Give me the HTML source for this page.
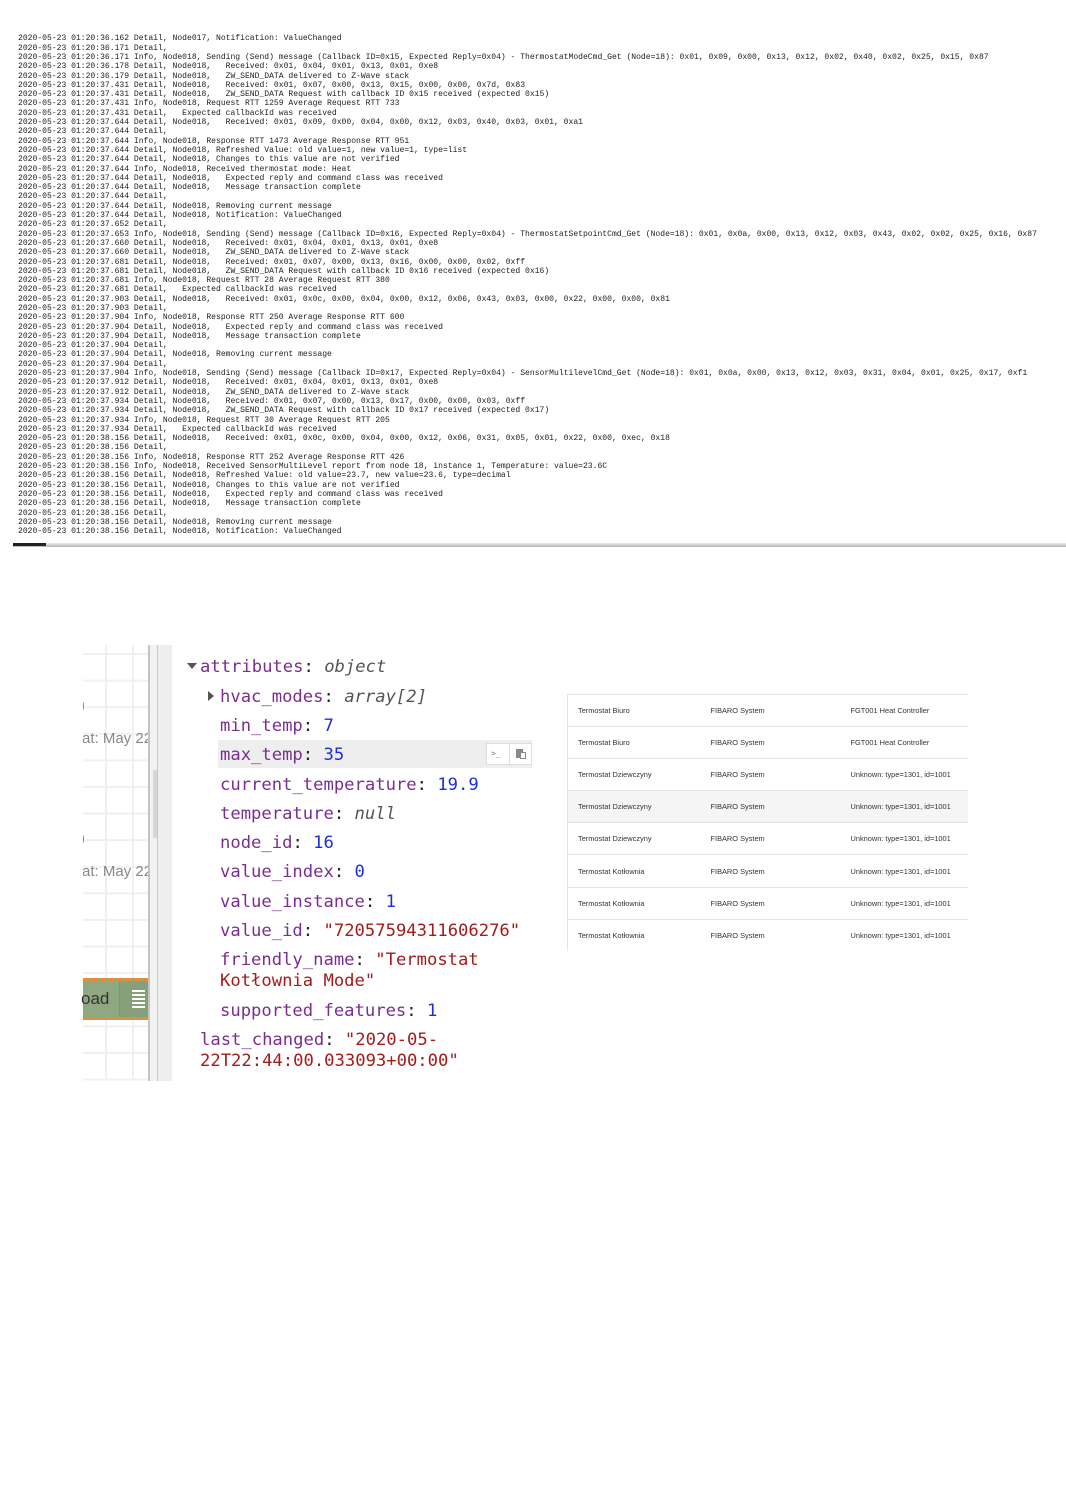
<!DOCTYPE html>
<html><head><meta charset="utf-8"><style>
*{margin:0;padding:0;box-sizing:border-box}
body{width:1066px;height:1508px;background:#fff;position:relative;overflow:hidden}
#log{position:absolute;left:18px;top:34.4px;font:8.06px/9.3px "Liberation Mono",monospace;color:#222;white-space:pre}
.sb{position:absolute;left:13px;top:543px;width:1053px;height:4px;background:linear-gradient(#e8e8e8,#b8b8b8)}
.sb i{position:absolute;left:0;top:0;width:33px;height:3px;background:#222}
.canvas{position:absolute;left:83px;top:645px;width:66px;height:436px;background-color:#fff;
background-image:linear-gradient(#f0f0f0 2px,transparent 2px),linear-gradient(90deg,#f0f0f0 2px,transparent 2px);
background-size:27px 26.6px;background-position:0 8px,22px 0}
.lab{position:absolute;font:15px "Liberation Sans",sans-serif;color:#888;white-space:nowrap}
.node{position:absolute;left:83px;top:978px;width:66px;height:42px;background:#8fa882;border-top:3px dashed #f08a2c;border-bottom:3px dashed #f08a2c}
.node .d{position:absolute;left:36px;top:0;width:30px;height:100%;background:#86a07a;border-left:1px solid #7d9572}
.json{position:absolute;font:17.2px/20px "DejaVu Sans Mono",monospace;white-space:pre;color:#7a2e8f}
.n{color:#1c2fd6}.s{color:#a31c1c}.i{color:#555;font-style:italic}.p{color:#222}
table{position:absolute;left:567px;top:694px;width:401px;border-collapse:collapse;font:7.4px "Liberation Sans",sans-serif;color:#333;border-left:1px solid #e4e4e4}
td{height:32.1px;border-top:1px solid #e4e4e4;padding-left:10px;vertical-align:middle}
tr.g td{background:#f5f5f5}
</style></head><body>
<div id="log">2020-05-23 01:20:36.162 Detail, Node017, Notification: ValueChanged
2020-05-23 01:20:36.171 Detail,
2020-05-23 01:20:36.171 Info, Node018, Sending (Send) message (Callback ID=0x15, Expected Reply=0x04) - ThermostatModeCmd_Get (Node=18): 0x01, 0x09, 0x00, 0x13, 0x12, 0x02, 0x40, 0x02, 0x25, 0x15, 0x87
2020-05-23 01:20:36.178 Detail, Node018,   Received: 0x01, 0x04, 0x01, 0x13, 0x01, 0xe8
2020-05-23 01:20:36.179 Detail, Node018,   ZW_SEND_DATA delivered to Z-Wave stack
2020-05-23 01:20:37.431 Detail, Node018,   Received: 0x01, 0x07, 0x00, 0x13, 0x15, 0x00, 0x00, 0x7d, 0x83
2020-05-23 01:20:37.431 Detail, Node018,   ZW_SEND_DATA Request with callback ID 0x15 received (expected 0x15)
2020-05-23 01:20:37.431 Info, Node018, Request RTT 1259 Average Request RTT 733
2020-05-23 01:20:37.431 Detail,   Expected callbackId was received
2020-05-23 01:20:37.644 Detail, Node018,   Received: 0x01, 0x09, 0x00, 0x04, 0x00, 0x12, 0x03, 0x40, 0x03, 0x01, 0xa1
2020-05-23 01:20:37.644 Detail,
2020-05-23 01:20:37.644 Info, Node018, Response RTT 1473 Average Response RTT 951
2020-05-23 01:20:37.644 Detail, Node018, Refreshed Value: old value=1, new value=1, type=list
2020-05-23 01:20:37.644 Detail, Node018, Changes to this value are not verified
2020-05-23 01:20:37.644 Info, Node018, Received thermostat mode: Heat
2020-05-23 01:20:37.644 Detail, Node018,   Expected reply and command class was received
2020-05-23 01:20:37.644 Detail, Node018,   Message transaction complete
2020-05-23 01:20:37.644 Detail,
2020-05-23 01:20:37.644 Detail, Node018, Removing current message
2020-05-23 01:20:37.644 Detail, Node018, Notification: ValueChanged
2020-05-23 01:20:37.652 Detail,
2020-05-23 01:20:37.653 Info, Node018, Sending (Send) message (Callback ID=0x16, Expected Reply=0x04) - ThermostatSetpointCmd_Get (Node=18): 0x01, 0x0a, 0x00, 0x13, 0x12, 0x03, 0x43, 0x02, 0x02, 0x25, 0x16, 0x87
2020-05-23 01:20:37.660 Detail, Node018,   Received: 0x01, 0x04, 0x01, 0x13, 0x01, 0xe8
2020-05-23 01:20:37.660 Detail, Node018,   ZW_SEND_DATA delivered to Z-Wave stack
2020-05-23 01:20:37.681 Detail, Node018,   Received: 0x01, 0x07, 0x00, 0x13, 0x16, 0x00, 0x00, 0x02, 0xff
2020-05-23 01:20:37.681 Detail, Node018,   ZW_SEND_DATA Request with callback ID 0x16 received (expected 0x16)
2020-05-23 01:20:37.681 Info, Node018, Request RTT 28 Average Request RTT 380
2020-05-23 01:20:37.681 Detail,   Expected callbackId was received
2020-05-23 01:20:37.903 Detail, Node018,   Received: 0x01, 0x0c, 0x00, 0x04, 0x00, 0x12, 0x06, 0x43, 0x03, 0x00, 0x22, 0x00, 0x00, 0x81
2020-05-23 01:20:37.903 Detail,
2020-05-23 01:20:37.904 Info, Node018, Response RTT 250 Average Response RTT 600
2020-05-23 01:20:37.904 Detail, Node018,   Expected reply and command class was received
2020-05-23 01:20:37.904 Detail, Node018,   Message transaction complete
2020-05-23 01:20:37.904 Detail,
2020-05-23 01:20:37.904 Detail, Node018, Removing current message
2020-05-23 01:20:37.904 Detail,
2020-05-23 01:20:37.904 Info, Node018, Sending (Send) message (Callback ID=0x17, Expected Reply=0x04) - SensorMultilevelCmd_Get (Node=18): 0x01, 0x0a, 0x00, 0x13, 0x12, 0x03, 0x31, 0x04, 0x01, 0x25, 0x17, 0xf1
2020-05-23 01:20:37.912 Detail, Node018,   Received: 0x01, 0x04, 0x01, 0x13, 0x01, 0xe8
2020-05-23 01:20:37.912 Detail, Node018,   ZW_SEND_DATA delivered to Z-Wave stack
2020-05-23 01:20:37.934 Detail, Node018,   Received: 0x01, 0x07, 0x00, 0x13, 0x17, 0x00, 0x00, 0x03, 0xff
2020-05-23 01:20:37.934 Detail, Node018,   ZW_SEND_DATA Request with callback ID 0x17 received (expected 0x17)
2020-05-23 01:20:37.934 Info, Node018, Request RTT 30 Average Request RTT 205
2020-05-23 01:20:37.934 Detail,   Expected callbackId was received
2020-05-23 01:20:38.156 Detail, Node018,   Received: 0x01, 0x0c, 0x00, 0x04, 0x00, 0x12, 0x06, 0x31, 0x05, 0x01, 0x22, 0x00, 0xec, 0x18
2020-05-23 01:20:38.156 Detail,
2020-05-23 01:20:38.156 Info, Node018, Response RTT 252 Average Response RTT 426
2020-05-23 01:20:38.156 Info, Node018, Received SensorMultiLevel report from node 18, instance 1, Temperature: value=23.6C
2020-05-23 01:20:38.156 Detail, Node018, Refreshed Value: old value=23.7, new value=23.6, type=decimal
2020-05-23 01:20:38.156 Detail, Node018, Changes to this value are not verified
2020-05-23 01:20:38.156 Detail, Node018,   Expected reply and command class was received
2020-05-23 01:20:38.156 Detail, Node018,   Message transaction complete
2020-05-23 01:20:38.156 Detail,
2020-05-23 01:20:38.156 Detail, Node018, Removing current message
2020-05-23 01:20:38.156 Detail, Node018, Notification: ValueChanged</div>
<div class="sb"><i></i></div>

<div class="canvas"></div>
<div style="position:absolute;left:83px;top:645px;width:66px;height:436px;overflow:hidden">
  <div class="lab" style="left:-3px;top:52px">)</div>
  <div class="lab" style="left:-1px;top:85px">at: May 22</div>
  <div class="lab" style="left:-3px;top:185px">)</div>
  <div class="lab" style="left:-1px;top:218px">at: May 22</div>
</div>
<div class="node"><div class="lab" style="left:-2px;top:8px;color:#333;font-size:17px">oad</div><div class="d">
<div style="position:absolute;left:12px;top:9px;width:13px;height:19px;background:repeating-linear-gradient(#fff 0 2px,transparent 2px 4px)"></div></div></div>
<div style="position:absolute;left:148px;top:645px;width:2px;height:436px;background:#c4c4c4"></div>
<div style="position:absolute;left:150px;top:645px;width:7px;height:436px;background:#f2f2f2"></div>
<div style="position:absolute;left:153px;top:770px;width:4px;height:68px;background:#d6d6d6"></div>
<div style="position:absolute;left:157px;top:645px;width:1px;height:436px;background:#c8c8c8"></div>
<div style="position:absolute;left:158px;top:645px;width:14px;height:436px;background:#eee"></div>

<div style="position:absolute;left:218px;top:740px;width:314px;height:28px;background:#eee"></div>
<div style="position:absolute;left:486px;top:743px;width:46px;height:22px;border:1px solid #ddd;background:#fff;font:8px 'DejaVu Sans Mono',monospace;color:#777">
<span style="position:absolute;left:4px;top:5px">&gt;_</span><span style="position:absolute;left:22px;top:0;width:1px;height:20px;background:#ddd"></span>
<span style="position:absolute;left:29px;top:5px;width:7px;height:9px;background:#888"></span><span style="position:absolute;left:33px;top:8px;width:6px;height:7px;background:#fff;border:1px solid #888"></span></div>

<div style="position:absolute;left:187px;top:663px;width:0;height:0;border-left:5px solid transparent;border-right:5px solid transparent;border-top:6px solid #555"></div>
<div style="position:absolute;left:208px;top:691px;width:0;height:0;border-top:5px solid transparent;border-bottom:5px solid transparent;border-left:6px solid #555"></div>
<div class="json" style="left:200px;top:657px">attributes<span class="p">:</span> <span class="i">object</span></div>
<div class="json" style="left:220px;top:687px">hvac_modes<span class="p">:</span> <span class="i">array[2]</span></div>
<div class="json" style="left:220px;top:716px">min_temp<span class="p">:</span> <span class="n">7</span></div>
<div class="json" style="left:220px;top:745px">max_temp<span class="p">:</span> <span class="n">35</span></div>
<div class="json" style="left:220px;top:775px">current_temperature<span class="p">:</span> <span class="n">19.9</span></div>
<div class="json" style="left:220px;top:804px">temperature<span class="p">:</span> <span class="i">null</span></div>
<div class="json" style="left:220px;top:833px">node_id<span class="p">:</span> <span class="n">16</span></div>
<div class="json" style="left:220px;top:862px">value_index<span class="p">:</span> <span class="n">0</span></div>
<div class="json" style="left:220px;top:892px">value_instance<span class="p">:</span> <span class="n">1</span></div>
<div class="json" style="left:220px;top:921px">value_id<span class="p">:</span> <span class="s">"72057594311606276"</span></div>
<div class="json" style="left:220px;top:950px;line-height:21px">friendly_name<span class="p">:</span> <span class="s">"Termostat
Kotłownia Mode"</span></div>
<div class="json" style="left:220px;top:1001px">supported_features<span class="p">:</span> <span class="n">1</span></div>
<div class="json" style="left:200px;top:1030px;line-height:21px">last_changed<span class="p">:</span> <span class="s">"2020-05-
22T22:44:00.033093+00:00"</span></div>

<table>
<colgroup><col style="width:133px"><col style="width:140px"><col></colgroup>
<tr><td>Termostat Biuro</td><td>FIBARO System</td><td>FGT001 Heat Controller</td></tr>
<tr><td>Termostat Biuro</td><td>FIBARO System</td><td>FGT001 Heat Controller</td></tr>
<tr><td>Termostat Dziewczyny</td><td>FIBARO System</td><td>Unknown: type=1301, id=1001</td></tr>
<tr class="g"><td>Termostat Dziewczyny</td><td>FIBARO System</td><td>Unknown: type=1301, id=1001</td></tr>
<tr><td>Termostat Dziewczyny</td><td>FIBARO System</td><td>Unknown: type=1301, id=1001</td></tr>
<tr><td>Termostat Kotłownia</td><td>FIBARO System</td><td>Unknown: type=1301, id=1001</td></tr>
<tr><td>Termostat Kotłownia</td><td>FIBARO System</td><td>Unknown: type=1301, id=1001</td></tr>
<tr><td>Termostat Kotłownia</td><td>FIBARO System</td><td>Unknown: type=1301, id=1001</td></tr>
</table>
</body></html>
